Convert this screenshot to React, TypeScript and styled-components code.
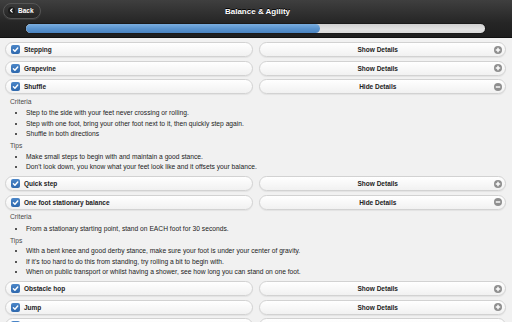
import React from 'react'
import styled, { createGlobalStyle } from 'styled-components'

type Exercise = {
  name: string
  open?: boolean
  criteria?: string[]
  tips?: string[]
}

const exercises: Exercise[] = [
  { name: 'Stepping' },
  { name: 'Grapevine' },
  {
    name: 'Shuffle',
    open: true,
    criteria: [
      'Step to the side with your feet never crossing or rolling.',
      'Step with one foot, bring your other foot next to it, then quickly step again.',
      'Shuffle in both directions',
    ],
    tips: [
      'Make small steps to begin with and maintain a good stance.',
      "Don't look down, you know what your feet look like and it offsets your balance.",
    ],
  },
  { name: 'Quick step' },
  {
    name: 'One foot stationary balance',
    open: true,
    criteria: ['From a stationary starting point, stand on EACH foot for 30 seconds.'],
    tips: [
      'With a bent knee and good derby stance, make sure your foot is under your center of gravity.',
      "If it's too hard to do this from standing, try rolling a bit to begin with.",
      'When on public transport or whilst having a shower, see how long you can stand on one foot.',
    ],
  },
  { name: 'Obstacle hop' },
  { name: 'Jump' },
  { name: 'Balance beam' },
]

const GlobalStyle = createGlobalStyle`
  html, body {
    margin: 0;
    padding: 0;
    background: #f1f1f1;
    font-family: 'Liberation Sans', Arial, sans-serif;
    overflow: hidden;
  }
`

const CheckMark = () => (
  <svg width="7" height="7" viewBox="0 0 10 10">
    <path d="M2 5.2 L4.2 7.4 L8.2 2.8" fill="none" stroke="#fff" strokeWidth="2" strokeLinecap="round" strokeLinejoin="round" />
  </svg>
)

const ToggleIcon = ({ open }: { open?: boolean }) => (
  <svg width="8" height="8" viewBox="0 0 16 16">
    <circle cx="8" cy="8" r="8" fill="#8e8e8e" />
    <rect x="3.5" y="6.6" width="9" height="2.8" fill="#fff" />
    {!open && <rect x="6.6" y="3.5" width="2.8" height="9" fill="#fff" />}
  </svg>
)

const BackArrow = () => (
  <svg width="7" height="7" viewBox="0 0 16 16">
    <circle cx="8" cy="8" r="8" fill="#1b1b1b" />
    <path d="M9.6 4.2 L5.8 8 L9.6 11.8" fill="none" stroke="#fff" strokeWidth="2.6" strokeLinecap="round" strokeLinejoin="round" />
  </svg>
)

const App: React.FC = () => {
  return (
    <>
      <GlobalStyle />
      <Header>
        <TopBar>
          <BackButton>
            <BackArrow />
            Back
          </BackButton>
          <Title>Balance &amp; Agility</Title>
          <span />
        </TopBar>
        <Track>
          <Fill style={{ width: '64%' }} />
        </Track>
      </Header>
      <List>
        {exercises.map((ex) => (
          <React.Fragment key={ex.name}>
            <Row>
              <Pill>
                <Check>
                  <CheckMark />
                </Check>
                <Label>{ex.name}</Label>
              </Pill>
              <DetailsButton>
                <span>{ex.open ? 'Hide Details' : 'Show Details'}</span>
                <IconSlot>
                  <ToggleIcon open={ex.open} />
                </IconSlot>
              </DetailsButton>
            </Row>
            {ex.open && (
              <Details>
                <Heading>Criteria</Heading>
                <Bullets>
                  {ex.criteria?.map((c) => (
                    <li key={c}>{c}</li>
                  ))}
                </Bullets>
                <Heading $spaced>Tips</Heading>
                <Bullets $tight>
                  {ex.tips?.map((t) => (
                    <li key={t}>{t}</li>
                  ))}
                </Bullets>
              </Details>
            )}
          </React.Fragment>
        ))}
      </List>
    </>
  )
}

const Header = styled.div`
  height: 38px;
  box-sizing: border-box;
  background: linear-gradient(#3f3f3f, #262626 60%, #1e1e1e);
  border-bottom: 1px solid #111;
  padding-top: 2px;
`

const TopBar = styled.div`
  display: grid;
  grid-template-columns: 1fr auto 1fr;
  align-items: center;
  height: 17px;
  padding-left: 3px;
`

const BackButton = styled.button`
  justify-self: start;
  display: flex;
  align-items: center;
  gap: 3px;
  height: 16px;
  box-sizing: border-box;
  padding: 0 6px 0 4px;
  border-radius: 8px;
  border: 1px solid #555;
  background: linear-gradient(#3a3a3a, #232323);
  box-shadow: 0 1px 0 rgba(255, 255, 255, 0.08);
  color: #fff;
  font-family: 'Liberation Sans', Arial, sans-serif;
  font-weight: bold;
  font-size: 6.5px;
`

const Title = styled.div`
  color: #fff;
  font-weight: bold;
  font-size: 8px;
  padding-top: 1px;
  text-shadow: 0 -1px 0 #000;
`

const Track = styled.div`
  margin: 4px 26px 0 25px;
  height: 11px;
  border-radius: 6px;
  background: linear-gradient(#d0d0d0, #e2e2e2 60%, #dadada);
  border: 1px solid #1a1a1a;
  box-sizing: border-box;
  overflow: hidden;
`

const Fill = styled.div`
  height: 100%;
  border-radius: 6px;
  background: linear-gradient(#7aaee0, #5b95cf 50%, #4a83c0);
`

const List = styled.div`
  padding: 0.5px 6px 0 5px;
`

const Row = styled.div`
  display: grid;
  grid-template-columns: 1fr 1fr;
  gap: 6px;
  margin-top: 3.5px;
`

const Pill = styled.div`
  display: flex;
  align-items: center;
  height: 15px;
  box-sizing: border-box;
  padding-left: 5px;
  border: 1px solid #d2d2d2;
  border-radius: 8px;
  background: linear-gradient(#ffffff, #f1f1f1);
  box-shadow: 0 1px 1px rgba(0, 0, 0, 0.06);
`

const Check = styled.span`
  display: flex;
  align-items: center;
  justify-content: center;
  width: 9px;
  height: 9px;
  border-radius: 2px;
  background: linear-gradient(#4b86c8, #2e68ad);
  margin-right: 4px;
`

const Label = styled.span`
  font-size: 6.5px;
  font-weight: bold;
  color: #222;
`

const DetailsButton = styled(Pill)`
  justify-content: center;
  position: relative;
  padding: 0 9px 0 0;
  font-size: 6.5px;
  font-weight: bold;
  color: #222;
`

const IconSlot = styled.span`
  position: absolute;
  right: 3px;
  top: 50%;
  transform: translateY(-50%);
  display: flex;
`

const Details = styled.div`
  padding: 2.5px 0 0 5px;
  font-size: 6.7px;
  line-height: 10.5px;
  color: #333;
`

const Heading = styled.div<{ $spaced?: boolean }>`
  color: #4a4a4a;
  margin-top: ${(p) => (p.$spaced ? '1.5px' : '0')};
`

const Bullets = styled.ul<{ $tight?: boolean }>`
  margin: 1px 0 0;
  padding-left: 16px;
  list-style: disc;
  color: #222;
  ${(p) => (p.$tight ? 'margin-top: 0;' : '')}
`

export default App
